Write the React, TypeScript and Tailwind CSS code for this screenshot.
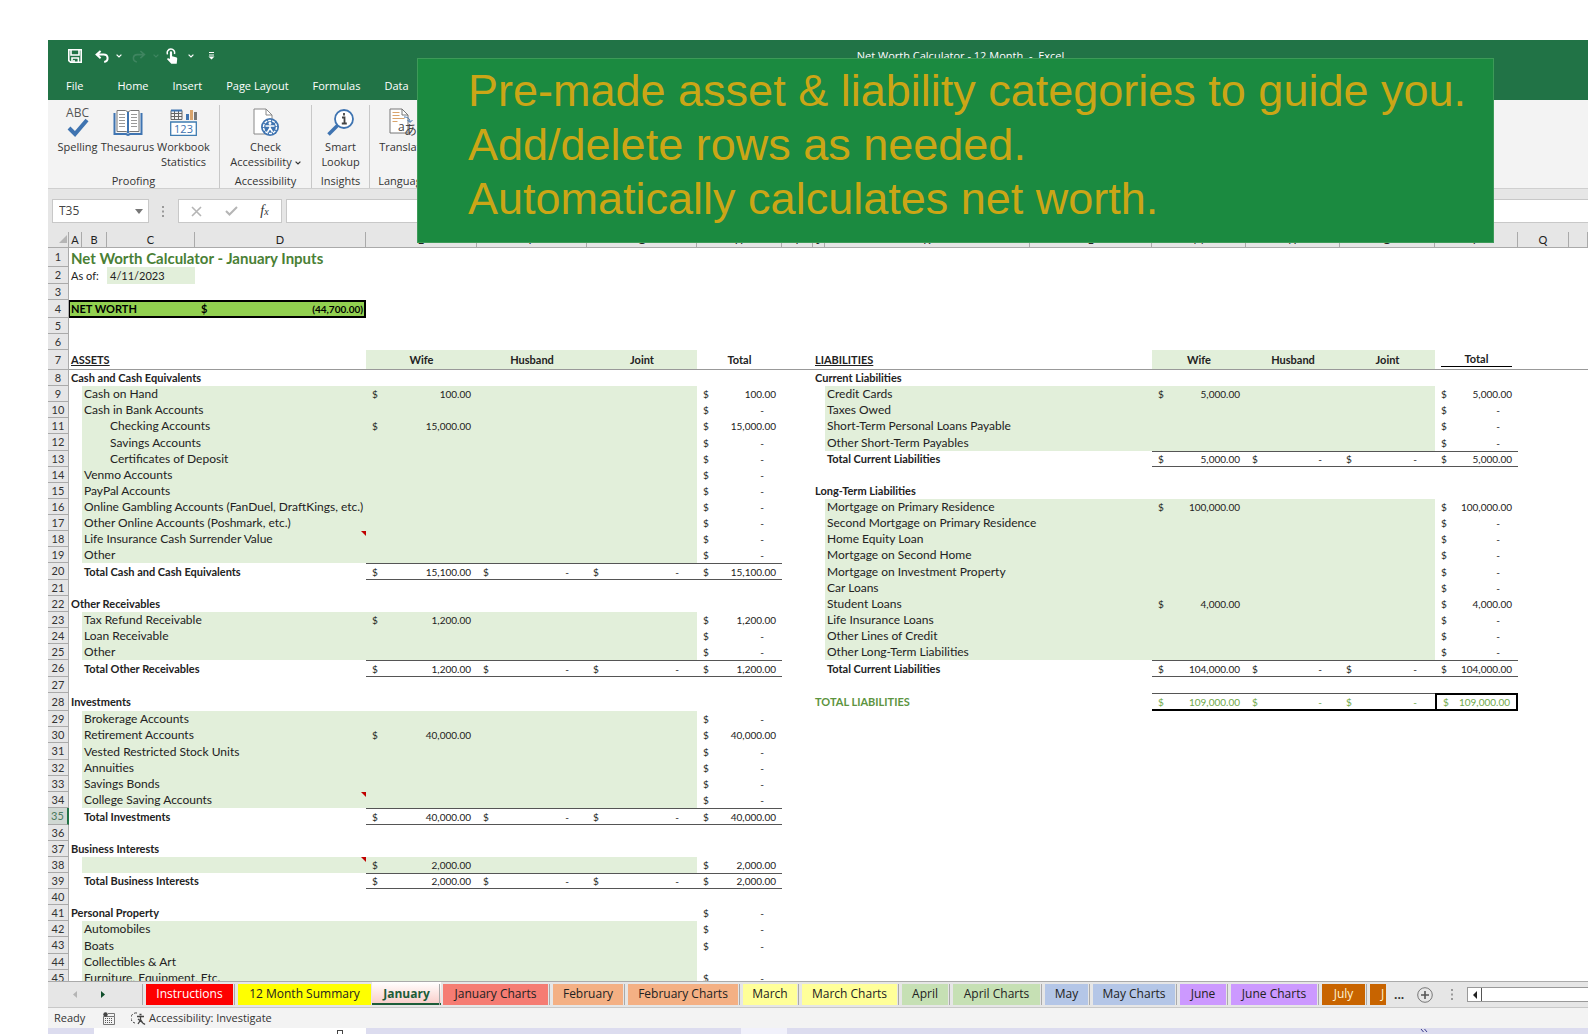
import type { ReactNode } from "react";

type Kind = "head" | "section" | "item" | "total" | "grand";

type Entry = {
  kind: Kind;
  label: string;
  deep?: boolean;
  note?: boolean;
  wife?: string;
  total?: string;
};

type Row = { n: number; left?: Entry; right?: Entry };

const item = (label: string, wife = "", total = "-", extra: Partial<Entry> = {}): Entry => ({
  kind: "item",
  label,
  wife,
  total,
  ...extra,
});
const section = (label: string, total = ""): Entry => ({ kind: "section", label, total });
const sum = (label: string, value: string): Entry => ({ kind: "total", label, wife: value, total: value });

const rows: Row[] = [
  { n: 7, left: { kind: "head", label: "ASSETS" }, right: { kind: "head", label: "LIABILITIES" } },
  { n: 8, left: section("Cash and Cash Equivalents"), right: section("Current Liabilities") },
  { n: 9, left: item("Cash on Hand", "100.00", "100.00"), right: item("Credit Cards", "5,000.00", "5,000.00") },
  { n: 10, left: item("Cash in Bank Accounts"), right: item("Taxes Owed") },
  {
    n: 11,
    left: item("Checking Accounts", "15,000.00", "15,000.00", { deep: true }),
    right: item("Short-Term Personal Loans Payable"),
  },
  { n: 12, left: item("Savings Accounts", "", "-", { deep: true }), right: item("Other Short-Term Payables") },
  {
    n: 13,
    left: item("Certificates of Deposit", "", "-", { deep: true }),
    right: sum("Total Current Liabilities", "5,000.00"),
  },
  { n: 14, left: item("Venmo Accounts") },
  { n: 15, left: item("PayPal Accounts"), right: section("Long-Term Liabilities") },
  {
    n: 16,
    left: item("Online Gambling Accounts (FanDuel, DraftKings, etc.)"),
    right: item("Mortgage on Primary Residence", "100,000.00", "100,000.00"),
  },
  { n: 17, left: item("Other Online Accounts (Poshmark, etc.)"), right: item("Second Mortgage on Primary Residence") },
  { n: 18, left: item("Life Insurance Cash Surrender Value", "", "-", { note: true }), right: item("Home Equity Loan") },
  { n: 19, left: item("Other"), right: item("Mortgage on Second Home") },
  { n: 20, left: sum("Total Cash and Cash Equivalents", "15,100.00"), right: item("Mortgage on Investment Property") },
  { n: 21, right: item("Car Loans") },
  { n: 22, left: section("Other Receivables"), right: item("Student Loans", "4,000.00", "4,000.00") },
  { n: 23, left: item("Tax Refund Receivable", "1,200.00", "1,200.00"), right: item("Life Insurance Loans") },
  { n: 24, left: item("Loan Receivable"), right: item("Other Lines of Credit") },
  { n: 25, left: item("Other"), right: item("Other Long-Term Liabilities") },
  {
    n: 26,
    left: sum("Total Other Receivables", "1,200.00"),
    right: sum("Total Current Liabilities", "104,000.00"),
  },
  { n: 27 },
  {
    n: 28,
    left: section("Investments"),
    right: { kind: "grand", label: "TOTAL LIABILITIES", wife: "109,000.00", total: "109,000.00" },
  },
  { n: 29, left: item("Brokerage Accounts") },
  { n: 30, left: item("Retirement Accounts", "40,000.00", "40,000.00") },
  { n: 31, left: item("Vested Restricted Stock Units") },
  { n: 32, left: item("Annuities") },
  { n: 33, left: item("Savings Bonds") },
  { n: 34, left: item("College Saving Accounts", "", "-", { note: true }) },
  { n: 35, left: sum("Total Investments", "40,000.00") },
  { n: 36 },
  { n: 37, left: section("Business Interests") },
  { n: 38, left: item("", "2,000.00", "2,000.00", { note: true }) },
  { n: 39, left: sum("Total Business Interests", "2,000.00") },
  { n: 40 },
  { n: 41, left: section("Personal Property", "-") },
  { n: 42, left: item("Automobiles") },
  { n: 43, left: item("Boats") },
  { n: 44, left: item("Collectibles & Art", "", "") },
  { n: 45, left: item("Furniture, Equipment, Etc.") },
];

const rowHeights: Record<number, string> = {
  7: "h-5",
  12: "h-[17px]",
  20: "h-[17px]",
  26: "h-[17px]",
  28: "h-[17px]",
  31: "h-[17px]",
  35: "h-[17px]",
  43: "h-[17px]",
};

const columns: [string, string][] = [
  ["A", "w-[13px]"],
  ["B", "w-[25px]"],
  ["C", "w-[88px]"],
  ["D", "w-[171px]"],
  ["E", "w-[111px]"],
  ["F", "w-[110px]"],
  ["G", "w-[110px]"],
  ["H", "w-[85px]"],
  ["I", "w-[31px]"],
  ["J", "w-[12px]"],
  ["K", "w-[205px]"],
  ["L", "w-[122px]"],
  ["M", "w-[94px]"],
  ["N", "w-[94px]"],
  ["O", "w-[95px]"],
  ["P", "w-[83px]"],
  ["Q", "w-[51px]"],
  ["", ""],
];

const sheetTabs = [
  { name: "Instructions", style: "w-[87px] bg-[#fe0000] text-white" },
  { name: "12 Month Summary", style: "w-[133px] bg-[#ffff00] text-[#222]" },
  { name: "January", style: "w-[69px]", active: true },
  { name: "January Charts", style: "w-[105px] bg-[#f57c73] text-[#222]" },
  { name: "February", style: "w-[70px] bg-[#f4b084] text-[#222]" },
  { name: "February Charts", style: "w-[110px] bg-[#f4b084] text-[#222]" },
  { name: "March", style: "w-[54px] bg-[#ffff99] text-[#222]" },
  { name: "March Charts", style: "w-[95px] bg-[#ffff99] text-[#222]" },
  { name: "April", style: "w-[46px] bg-[#c6e0b4] text-[#222]" },
  { name: "April Charts", style: "w-[87px] bg-[#c6e0b4] text-[#222]" },
  { name: "May", style: "w-[43px] bg-[#b4c6e7] text-[#222]" },
  { name: "May Charts", style: "w-[82px] bg-[#b4c6e7] text-[#222]" },
  { name: "June", style: "w-[46px] bg-[#cc99ff] text-[#222]" },
  { name: "June Charts", style: "w-[86px] bg-[#cc99ff] text-[#222]" },
  { name: "July", style: "w-[43px] bg-[#c86400] text-[#fff3d0]" },
];

const GREEN = "bg-[#e2efda]";

const Money = ({ value }: { value?: string }) => {
  if (!value) return null;
  return (
    <div className="flex justify-between px-[6px] text-[10px] leading-[14px]">
      <span>$</span>
      <span className={value === "-" ? "pr-3" : ""}>{value}</span>
    </div>
  );
};

const RowHeader = ({ n }: { n: number }) => (
  <th
    scope="row"
    className={`border-r border-b p-0 text-center text-[11px] leading-[14px] font-normal ${
      n === 35 ? "border-r-2 border-r-[#217346] border-b-[#aaa] bg-[#d0d8d3] text-[#4a7a5e]" : "border-[#aaa] bg-[#e6e6e7] text-[#333]"
    }`}
  >
    {n}
  </th>
);

// One half of the sheet: spacer column, label columns, three owner columns and the total
const Half = ({ entry, side }: { entry?: Entry; side: "left" | "right" }) => {
  const span = side === "left" ? 3 : 2;
  if (!entry) return <td colSpan={span + 5} />;
  const { kind, label } = entry;

  if (kind === "head") {
    const cell = `border-b border-[#999] p-0 text-center font-bold ${GREEN}`;
    return (
      <>
        <td colSpan={span + 1} className="border-b border-[#999] p-0 pl-[2px] font-bold">
          <span className="underline">{label}</span>
        </td>
        <td className={cell}>Wife</td>
        <td className={cell}>Husband</td>
        <td className={cell}>Joint</td>
        <td className="border-b border-[#999] p-0 px-[6px] text-center font-bold">
          <div className={side === "right" ? "border-b border-black" : ""}>Total</div>
        </td>
      </>
    );
  }

  if (kind === "section") {
    return (
      <>
        <td colSpan={span + 1} className="p-0 pl-[2px] font-bold whitespace-nowrap">
          {label}
        </td>
        <td colSpan={3} />
        <td className="p-0">
          <Money value={entry.total} />
        </td>
      </>
    );
  }

  if (kind === "item") {
    return (
      <>
        <td />
        <td
          colSpan={span}
          className={`relative p-0 text-[12px] leading-[14px] whitespace-nowrap ${entry.deep ? "pl-[28px]" : "pl-[2px]"} ${GREEN}`}
        >
          {label}
          {entry.note && (
            <svg className="absolute top-0 right-0 size-[5px]" viewBox="0 0 5 5">
              <path d="M0 0h5v5z" fill="#c00000" />
            </svg>
          )}
        </td>
        <td className={`p-0 ${GREEN}`}>
          <Money value={entry.wife} />
        </td>
        <td colSpan={2} className={GREEN} />
        <td className="p-0">
          <Money value={entry.total} />
        </td>
      </>
    );
  }

  if (kind === "grand") {
    const cell = "border-t border-b-2 border-t-[#555] border-b-black p-0 text-[#70a84a]";
    return (
      <>
        <td colSpan={span + 1} className="p-0 pl-[2px] font-bold text-[#5c9440]">
          {label}
        </td>
        <td className={cell}>
          <Money value={entry.wife} />
        </td>
        <td className={cell}>
          <Money value="-" />
        </td>
        <td className={cell}>
          <Money value="-" />
        </td>
        <td className="border-2 border-black p-0 text-[#70a84a]">
          <Money value={entry.total} />
        </td>
      </>
    );
  }

  const cell = "border-y border-[#555] p-0";
  return (
    <>
      <td />
      <td colSpan={span} className="p-0 pl-[2px] font-bold whitespace-nowrap">
        {label}
      </td>
      <td className={cell}>
        <Money value={entry.wife} />
      </td>
      <td className={cell}>
        <Money value="-" />
      </td>
      <td className={cell}>
        <Money value="-" />
      </td>
      <td className={cell}>
        <Money value={entry.total} />
      </td>
    </>
  );
};

const Sheet = () => (
  <table className="w-full table-fixed border-separate border-spacing-0 font-[Lato,'Open_Sans',sans-serif] text-[11px] leading-[14px] text-[#222]">
    <colgroup>
      <col className="w-[21px]" />
      {columns.map(([name, width], i) => (
        <col key={name || i} className={width} />
      ))}
    </colgroup>
    <thead>
      <tr className="h-4 bg-[#e6e6e6]">
        <th className="border-r border-b border-[#aaa] p-0">
          <svg className="ml-auto size-[9px]" viewBox="0 0 9 9">
            <path d="M8 0v8H0z" fill="#b5b5b5" />
          </svg>
        </th>
        {columns.map(([name], i) => (
          <th key={name || i} scope="col" className="border-r border-b border-[#aaa] p-0 text-center font-normal">
            {name}
          </th>
        ))}
      </tr>
    </thead>
    <tbody>
      <tr className="h-[19px]">
        <RowHeader n={1} />
        <td colSpan={18} className="p-0 pl-[2px] text-[15px] leading-[18px] font-bold text-[#4a8035]">
          Net Worth Calculator - January Inputs
        </td>
      </tr>
      <tr className="h-[17px]">
        <RowHeader n={2} />
        <td colSpan={2} className="p-0 pl-[2px] whitespace-nowrap">
          As of:
        </td>
        <td className={`p-0 pl-[3px] ${GREEN}`}>4/11/2023</td>
        <td colSpan={15} />
      </tr>
      <tr className="h-4">
        <RowHeader n={3} />
        <td colSpan={18} />
      </tr>
      <tr className="h-[18px] font-bold text-black">
        <RowHeader n={4} />
        <td colSpan={3} className="border-y-2 border-l border-black bg-[#92d050] p-0 pl-px">
          NET WORTH
        </td>
        <td className="border-y-2 border-r-2 border-black bg-[#92d050] p-0">
          <div className="flex justify-between pr-px pl-[6px]">
            <span>$</span>
            <span className="text-[10px]">(44,700.00)</span>
          </div>
        </td>
        <td colSpan={14} />
      </tr>
      <tr className="h-4">
        <RowHeader n={5} />
        <td colSpan={18} />
      </tr>
      <tr className="h-4">
        <RowHeader n={6} />
        <td colSpan={18} />
      </tr>
      {rows.map((row) => {
        const line = row.n === 7 ? "border-b border-[#999]" : "";
        return (
          <tr key={row.n} className={rowHeights[row.n] ?? "h-4"}>
            <RowHeader n={row.n} />
            <Half entry={row.left} side="left" />
            <td className={line} />
            <Half entry={row.right} side="right" />
            <td colSpan={2} className={line} />
          </tr>
        );
      })}
    </tbody>
  </table>
);

const Chevron = ({ className = "" }: { className?: string }) => (
  <svg className={`h-[4px] w-[6px] ${className}`} viewBox="0 0 6 4" fill="none" stroke="currentColor" strokeWidth="1.2">
    <path d="M.6.6 3 3 5.4.6" />
  </svg>
);

const QuickAccess = () => (
  <div className="flex items-center pl-[20px] text-white">
    <button aria-label="Save">
      <svg className="size-[14px]" viewBox="0 0 14 14" fill="none" stroke="currentColor" strokeWidth="1.6">
        <path d="M.8.8h12.4v12.4H2.6L.8 11.6zM3 1v5h8V1M4 13V9h6.4v4M6 11v2" />
      </svg>
    </button>
    <button aria-label="Undo" className="ml-[13px] flex items-center gap-[7px]">
      <svg className="h-[13px] w-[14px]" viewBox="0 0 14 13" fill="none" stroke="currentColor" strokeWidth="2">
        <path d="M5.6 1 1.6 4.6l4 3.6M2 4.6h6.6c5 0 5.4 6.4.6 7.4" />
      </svg>
      <Chevron />
    </button>
    <button aria-label="Redo" className="ml-[10px] flex items-center gap-[7px] text-[#3f8560]">
      <svg className="h-[13px] w-[14px]" viewBox="0 0 14 13" fill="none" stroke="currentColor" strokeWidth="1.6">
        <path d="m8.4 1 4 3.6-4 3.6M12 4.6H5.4c-5 0-5.4 6.4-.6 7.4" />
      </svg>
      <Chevron />
    </button>
    <button aria-label="Touch/Mouse Mode" className="ml-[7px] flex items-center gap-[10px]">
      <svg className="h-4 w-[12px]" viewBox="0 0 12 16">
        <path d="M1.6 6.4A3.7 3.7 0 1 1 8.4 6" fill="none" stroke="currentColor" strokeWidth="1.5" />
        <path
          d="M3.9 4.3c0-1.5 2.2-1.5 2.2 0v4l3.9.9c.9.2 1.3.8 1.2 1.7l-.5 4.9H5.3L.9 10.9c.8-1.2 2-.8 3 .2z"
          fill="currentColor"
        />
      </svg>
      <Chevron />
    </button>
    <button aria-label="Customize Quick Access Toolbar" className="ml-[14px]">
      <svg className="h-[8px] w-[7px]" viewBox="0 0 7 8" fill="currentColor">
        <path d="M1 0h5v1H1zM1 2.5h5v1H1zM.5 4.6h6l-3 3z" />
      </svg>
    </button>
  </div>
);

const Tool = ({ width, icon, children }: { width: string; icon: ReactNode; children: ReactNode }) => (
  <button className={`flex flex-col items-center ${width}`}>
    <span className="flex h-[34px] items-center">{icon}</span>
    <span className="text-center leading-[15px] whitespace-nowrap">{children}</span>
  </button>
);

const SpellingIcon = () => (
  <span className="flex flex-col items-center text-[12px] leading-[11px] text-[#555]">
    ABC
    <svg className="h-[19px] w-[22px]" viewBox="0 0 22 19">
      <path d="M2 10 8 16 20 2" fill="none" stroke="#3f74b1" strokeWidth="4" />
    </svg>
  </span>
);

const ThesaurusIcon = () => (
  <svg className="h-[27px] w-[30px]" viewBox="0 0 30 27" fill="none">
    <path d="M1.5 4v21H13l2 1 2-1h11.500V4" stroke="#3f74b1" strokeWidth="2" />
    <path d="M4 1.500h8.500L15 3l2.500-1.500H26v21h-9l-2 1-2-1H4z" fill="#fff" stroke="#777" />
    <path d="M15 3v21" stroke="#3f74b1" strokeWidth="2" />
    <path d="M6 5.500h6m-6 3h6m-6 3h6m-6 3h6m-6 3h6M18 5.500h6m-6 3h6m-6 3h6m-6 3h6m-6 3h6" stroke="#999" />
  </svg>
);

const StatisticsIcon = () => (
  <svg className="h-[27px] w-[27px]" viewBox="0 0 27 27" fill="none">
    <path d="M1 1.500h11v9H1zM1 4.500h11M1 7.500h11M4.500 1.500v9M8.500 1.500v9" stroke="#666" />
    <path d="M1 1.500h11" stroke="#3f74b1" strokeWidth="2" />
    <path d="M16 5h3v6h-3z" fill="#3f74b1" />
    <path d="M20 1h3v10h-3z" fill="#d9a46c" />
    <path d="M24 3h3v8h-3z" fill="#777" />
    <path d="M.7 13h25.600v13.500H.7z" fill="#fff" stroke="#3f7cb1" strokeWidth="1.300" />
    <text x="13.500" y="23.500" textAnchor="middle" fontSize="11" fill="#3f74b1">
      123
    </text>
  </svg>
);

const AccessibilityIcon = () => (
  <svg className="h-[28px] w-[26px]" viewBox="0 0 26 28" fill="none">
    <path d="M1 1h12l6 6v19H1z" fill="#fff" stroke="#888" />
    <path d="M13 1v6h6" stroke="#888" />
    <circle cx="17" cy="19" r="9" fill="#3f74b1" />
    <circle cx="17" cy="19" r="6.500" stroke="#fff" strokeWidth="1.400" strokeDasharray="3 1" />
    <circle cx="17" cy="15.500" r="1.400" fill="#fff" />
    <path d="M12.500 18h9M17 18v2.500m0-.5-2.500 4m2.500-4 2.500 4" stroke="#fff" strokeWidth="1.500" />
  </svg>
);

const LookupIcon = () => (
  <svg className="h-[27px] w-[27px]" viewBox="0 0 27 27" fill="none">
    <path d="M1.500 25.500 11 16" stroke="#3f74b1" strokeWidth="3.600" />
    <circle cx="17" cy="10" r="9" fill="#fff" stroke="#3f74b1" strokeWidth="1.800" />
    <path d="M17 4v2.500M15 8.500h2.500V14M14.800 14.500h5" stroke="#444" strokeWidth="1.800" />
  </svg>
);

const TranslateIcon = () => (
  <svg className="h-[28px] w-[28px]" viewBox="0 0 28 28" fill="none">
    <path d="M1 1h12l6 6v18H1z" fill="#fff" stroke="#777" />
    <path d="M13 1v6h6" stroke="#777" />
    <path d="M3.500 4.500h7m-7 3h7m-7 3h12m-12 3h5" stroke="#d9a46c" />
    <path d="M15 9c4 0 6 2 6 5m-2.500-2 2.500 2.500 2.500-2.500" stroke="#3f74b1" />
    <text x="9" y="23" fontSize="12" fill="#444">
      a
    </text>
    <text x="15" y="26" fontSize="13" fill="#444" fontFamily="Noto Sans CJK JP, sans-serif">
      あ
    </text>
  </svg>
);

const Group = ({ title, width, children }: { title: string; width: string; children: ReactNode }) => (
  <div className={`flex flex-col justify-between ${width}`}>
    <div className="flex justify-center">{children}</div>
    <div className="text-center leading-[15px]">{title}</div>
  </div>
);

const Divider = () => <div className="w-px bg-[#c8c8c8]" />;

const Ribbon = () => (
  <div className="flex h-[89px] border-b border-[#cfcfcf] bg-[#f3f3f3] pt-[5px] text-[11px] text-[#333]">
    <Group title="Proofing" width="w-[171px]">
      <Tool width="w-[50px]" icon={<SpellingIcon />}>
        Spelling
      </Tool>
      <Tool width="w-[50px]" icon={<ThesaurusIcon />}>
        Thesaurus
      </Tool>
      <Tool width="w-[62px]" icon={<StatisticsIcon />}>
        Workbook
        <br />
        Statistics
      </Tool>
    </Group>
    <Divider />
    <Group title="Accessibility" width="w-[91px]">
      <Tool width="w-[90px]" icon={<AccessibilityIcon />}>
        Check
        <br />
        Accessibility <Chevron className="inline" />
      </Tool>
    </Group>
    <Divider />
    <Group title="Insights" width="w-[57px]">
      <Tool width="w-[56px]" icon={<LookupIcon />}>
        Smart
        <br />
        Lookup
      </Tool>
    </Group>
    <Divider />
    <Group title="Language" width="w-[66px]">
      <Tool width="w-[64px]" icon={<TranslateIcon />}>
        Translate
      </Tool>
    </Group>
  </div>
);

const FormulaBar = () => (
  <div className="flex h-[43px] items-start bg-[#e6e6e6] pt-[10px] pl-[4px]">
    <div className="flex h-[24px] w-[97px] items-center border border-[#c8c8c8] bg-white pr-[5px]">
      <input aria-label="Name Box" defaultValue="T35" className="w-full min-w-0 flex-1 pl-[6px] text-[12px] text-[#444] outline-none" />
      <svg className="h-[5px] w-[8px] shrink-0" viewBox="0 0 8 5">
        <path d="M0 0h8L4 5z" fill="#777" />
      </svg>
    </div>
    <svg className="mt-[7px] ml-[13px] h-[11px] w-[2px]" viewBox="0 0 2 11" fill="#999">
      <path d="M0 0h2v2H0zM0 4.500h2v2H0zM0 9h2v2H0z" />
    </svg>
    <div className="ml-[14px] flex h-[24px] w-[104px] items-center justify-around border border-[#c8c8c8] bg-white px-[1px]">
      <button aria-label="Cancel">
        <svg className="size-[11px]" viewBox="0 0 11 11" fill="none" stroke="#b5b5b5" strokeWidth="1.600">
          <path d="m1 1 9 9M10 1l-9 9" />
        </svg>
      </button>
      <button aria-label="Enter">
        <svg className="h-[10px] w-[13px]" viewBox="0 0 13 10" fill="none" stroke="#b5b5b5" strokeWidth="2">
          <path d="m1 5 3.500 3.500L12 1" />
        </svg>
      </button>
      <button aria-label="Insert Function" className="font-['Liberation_Serif',serif] text-[14px] leading-none text-[#333] italic">
        f<span className="text-[10px]">x</span>
      </button>
    </div>
    <input aria-label="Formula Bar" className="ml-[4px] h-[24px] min-w-0 flex-1 border-y border-l border-[#c8c8c8] bg-white outline-none" />
  </div>
);

const SheetTabs = () => (
  <div className="flex h-[27px] shrink-0 items-center border-t border-b border-[#aaa] border-b-[#c8c8c8] bg-[#e6e6e6] text-[12px]">
    <div className="flex w-[94px] items-center gap-[24px] pl-[25px]">
      <button aria-label="Previous sheet">
        <svg className="h-[7px] w-[4px]" viewBox="0 0 4 7">
          <path d="M4 0v7L0 3.500z" fill="#b5b5b5" />
        </svg>
      </button>
      <button aria-label="Next sheet">
        <svg className="h-[7px] w-[4px]" viewBox="0 0 4 7">
          <path d="M0 0v7l4-3.500z" fill="#0e4d2a" />
        </svg>
      </button>
    </div>
    {sheetTabs.map((tab) =>
      tab.active ? (
        <button
          key={tab.name}
          className={`mr-[-2px] h-[23px] self-start border-b-2 border-[#1c5c38] bg-linear-to-b from-white to-[#f9cfcb] pt-[3px] font-bold text-[#1c5c38] ${tab.style}`}
        >
          {tab.name}
        </button>
      ) : (
        <div key={tab.name} className="flex h-[21px] border-l border-[#aaa] pl-[3px]">
          <button className={`mr-px pb-[2px] whitespace-nowrap ${tab.style}`}>{tab.name}</button>
        </div>
      ),
    )}
    <div className="flex h-[21px] border-l border-[#aaa] pl-[3px]">
      <button aria-label="July Charts" className="w-4 overflow-hidden bg-[#c86400] pb-[2px] pl-[11px] text-left text-[#fff3d0]">
        J
      </button>
    </div>
    <button aria-label="More sheets" className="ml-[8px] font-bold text-[#333]">
      ...
    </button>
    <button aria-label="New sheet" className="ml-[13px]">
      <svg className="size-4" viewBox="0 0 16 16" fill="none" stroke="#777">
        <circle cx="8" cy="8" r="7.300" />
        <path d="M8 4v8M4 8h8" strokeWidth="1.600" stroke="#555" />
      </svg>
    </button>
    <svg className="ml-[18px] h-[11px] w-[2px]" viewBox="0 0 2 11" fill="#999">
      <path d="M0 0h2v2H0zM0 4.500h2v2H0zM0 9h2v2H0z" />
    </svg>
    <div className="ml-[14px] flex h-[15px] flex-1 border-y border-l border-[#999] bg-white">
      <button aria-label="Scroll left" className="flex w-[14px] items-center justify-center border-r border-[#555]">
        <svg className="h-[8px] w-[4px]" viewBox="0 0 4 8">
          <path d="M4 0v8L0 4z" fill="#222" />
        </svg>
      </button>
    </div>
  </div>
);

const StatusBar = () => (
  <div className="flex h-5 shrink-0 items-center bg-[#f3f3f3] pl-[6px] text-[11px] text-[#333]">
    <span className="w-[49px]">Ready</span>
    <svg className="h-[13px] w-[12px]" viewBox="0 0 12 13" fill="none" stroke="#777">
      <path d="M.5 4.500h11v8H.5zM5 1.500h6.500v3" />
      <path d="M2 6.500h8M2 8.500h8M2 10.500h8" stroke="#555" strokeDasharray="1 1" />
      <circle cx="2.500" cy="2.500" r="2.200" fill="#444" stroke="none" />
    </svg>
    <button className="ml-[16px] flex items-center gap-[3px]">
      <svg className="h-[13px] w-[15px]" viewBox="0 0 15 13" fill="none" stroke="#444">
        <path d="M6 1A5 5 0 0 0 4 11" strokeDasharray="3 1.500" />
        <path d="M6 4.500h7M9.500 4v4L7 12M9.500 7.500l3 4.500M8.500 2.500h2M7 7l7 5.500" strokeWidth="1.300" />
      </svg>
      Accessibility: Investigate
    </button>
  </div>
);

const BottomEdge = () => (
  <div className="flex h-[6px] shrink-0 bg-[#dcdcef]">
    <div className="ml-[46px] flex w-[272px] justify-end bg-white pr-[23px]">
      <div className="mt-[2px] w-[6px] border-x border-t border-[#444]" />
    </div>
    <div className="ml-[375px] w-[46px] bg-[#f1f1fb]" />
    <svg className="mr-[160px] ml-auto h-[4px] w-[8px]" viewBox="0 0 8 4" fill="none" stroke="#3b3b8c">
      <path d="m1 1 2.500 3M4.500 1 7 4" />
    </svg>
  </div>
);

export default function App() {
  return (
    <div className="h-screen overflow-hidden bg-white pt-10 pl-12 font-['Open_Sans','Noto_Sans',sans-serif]">
      <div className="relative flex h-full flex-col">
        <header className="shrink-0 bg-[#217346] text-white">
          <div className="flex h-8 items-center">
            <QuickAccess />
            <h1 className="flex-1 pl-[118px] text-center text-[11px] whitespace-pre">Net Worth Calculator - 12 Month  -  Excel</h1>
          </div>
          <nav className="flex h-7 items-center gap-[24px] pl-[18px] text-[11px]">
            <button className="mr-[10px]">File</button>
            <button>Home</button>
            <button>Insert</button>
            <button>Page Layout</button>
            <button>Formulas</button>
            <button>Data</button>
          </nav>
        </header>
        <Ribbon />
        <FormulaBar />
        <main className="min-h-0 flex-1 overflow-hidden">
          <Sheet />
        </main>
        <SheetTabs />
        <StatusBar />
        <BottomEdge />

        {/* promo caption lying over the ribbon */}
        <div className="absolute top-[18px] right-[94px] left-[369px] h-[185px] border border-[#3d9a58] bg-[#1b8a40] pt-[5px] pl-[50px] font-['Liberation_Sans',Arial,sans-serif] text-[45px] leading-[54px] whitespace-nowrap text-[#cba616]">
          <p>Pre-made asset &amp; liability categories to guide you.</p>
          <p>Add/delete rows as needed.</p>
          <p>Automatically calculates net worth.</p>
        </div>
      </div>
    </div>
  );
}
